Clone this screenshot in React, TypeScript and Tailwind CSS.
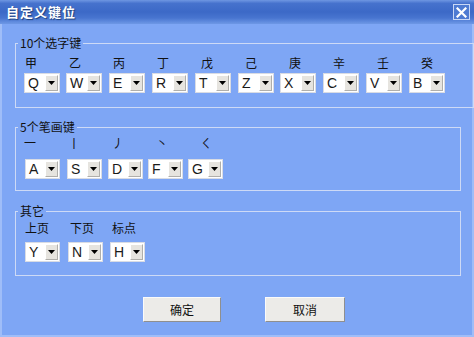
import React from "react";

const cjk = { fontFamily: '"Noto Sans CJK SC", "Noto Sans", sans-serif' };
const latin = { fontFamily: '"Liberation Sans", Arial, sans-serif' };

function Drop({ v, w = "w-[36px]", cls = "" }: { v: string; w?: string; cls?: string }) {
  return (
    <div className={`${w} ${cls} h-[20px] flex bg-white border border-[#d9dce4] p-[1px]`}>
      <span className="flex-1 pl-[2px] text-[14px] leading-[16px] text-[#1a1a1a]" style={latin}>
        {v}
      </span>
      <span className="w-[13px] flex items-center justify-center bg-[#e6e4df] border-t border-l border-t-[#ffffff] border-l-[#ffffff] border-b border-r border-b-[#b0afab] border-r-[#b0afab]">
        <svg width="7" height="4" viewBox="0 0 7 4">
          <path d="M0 0 H7 L3.5 4 Z" fill="#000" />
        </svg>
      </span>
    </div>
  );
}

function Group({ title, children, cls = "" }: { title: string; children: React.ReactNode; cls?: string }) {
  return (
    <fieldset className={`border border-[#cddaf6] px-[8px] ${cls}`}>
      <legend className="-ml-[6px] px-[2px] text-[12px] leading-[16px] text-[#111]" style={cjk}>
        {title}
      </legend>
      {children}
    </fieldset>
  );
}

const row1 = [
  ["甲", "Q"], ["乙", "W"], ["丙", "E"], ["丁", "R"], ["戊", "T"],
  ["己", "Z"], ["庚", "X"], ["辛", "C"], ["壬", "V"], ["癸", "B"],
];
const row1Gap = ["", "ml-[6px]", "ml-[7px]", "ml-[7px]", "ml-[7px]", "ml-[7px]", "ml-[6px]", "ml-[7px]", "ml-[7px]", "ml-[7px]"];
const row2 = [["一", "A"], ["丨", "S"], ["丿", "D"], ["丶", "F"], ["ㄑ", "G"]];
const row2Gap = ["", "ml-[7px]", "ml-[6px]", "ml-[5px]", "ml-[5px]"];

export default function App() {
  return (
    <div className="w-[474px] h-[337px] flex flex-col overflow-hidden select-none">
      <div className="h-[24px] flex items-center justify-between pl-[6px] pr-[4px] bg-[linear-gradient(180deg,#6f97e2_0%,#4672cd_14%,#3c69c7_50%,#4875d0_75%,#6e98e6_100%)]">
        <span
          className="text-white text-[13px] font-bold leading-[16px] tracking-[1px] [text-shadow:1px_1px_1px_#20407a]"
          style={cjk}
        >
          自定义键位
        </span>
        <div className="w-[17px] h-[16px] border border-[#c9d8f5] bg-[#4e7bd2] flex items-center justify-center">
          <svg width="11" height="11" viewBox="0 0 11 11">
            <path d="M1.5 1.5 L9.5 9.5 M9.5 1.5 L1.5 9.5" stroke="#fff" strokeWidth="2.2" strokeLinecap="square" />
          </svg>
        </div>
      </div>
      <div className="flex-1 bg-[#7ea6f5] border-l-2 border-r-2 border-b-2 border-[#9fbdf8] pt-[11px] pl-[13px] pr-[11px] flex flex-col">
        <Group title="10个选字键" cls="pt-[4px] pb-[14px]">
          <div className="flex ml-[1px]">
            {row1.map(([l]) => (
              <span key={l} className="w-[44px] text-[12px] leading-[16px] text-[#111]" style={cjk}>
                {l}
              </span>
            ))}
          </div>
          <div className="flex mt-[2px]">
            {row1.map(([, v], i) => (
              <Drop key={v} v={v} cls={row1Gap[i]} />
            ))}
          </div>
        </Group>
        <Group title="5个笔画键" cls="mt-[11px] pt-0 pb-[11px]">
          <div className="flex">
            {row2.map(([l]) => (
              <span key={l} className="w-[44px] text-[12px] leading-[16px] text-[#111]" style={cjk}>
                <span className="inline-block w-[12px] text-center">{l}</span>
              </span>
            ))}
          </div>
          <div className="flex mt-[8px] ml-[1px]">
            {row2.map(([, v], i) => (
              <Drop key={v} v={v} w="w-[35px]" cls={row2Gap[i]} />
            ))}
          </div>
        </Group>
        <Group title="其它" cls="mt-[12px] pt-[1px] pb-[13px]">
          <div className="flex ml-[1px] text-[12px] leading-[16px] text-[#111]" style={cjk}>
            <span className="w-[45px]">上页</span>
            <span className="w-[42px]">下页</span>
            <span>标点</span>
          </div>
          <div className="flex mt-[6px] ml-[1px]">
            <Drop v="Y" w="w-[35px]" />
            <Drop v="N" w="w-[35px]" cls="ml-[8px]" />
            <Drop v="H" w="w-[35px]" cls="ml-[7px]" />
          </div>
        </Group>
        <div className="flex mt-[21px] ml-[128px] gap-[44px]">
          {["确定", "取消"].map((t, i) => (
            <button
              key={t}
              className={`${i === 0 ? "w-[78px]" : "w-[80px]"} h-[25px] bg-[#ecebe8] border border-t-[#fafafa] border-l-[#fafafa] border-b-[#8f8f8f] border-r-[#8f8f8f] text-[12px] text-[#111] flex items-center justify-center`}
              style={cjk}
            >
              {t}
            </button>
          ))}
        </div>
      </div>
    </div>
  );
}
